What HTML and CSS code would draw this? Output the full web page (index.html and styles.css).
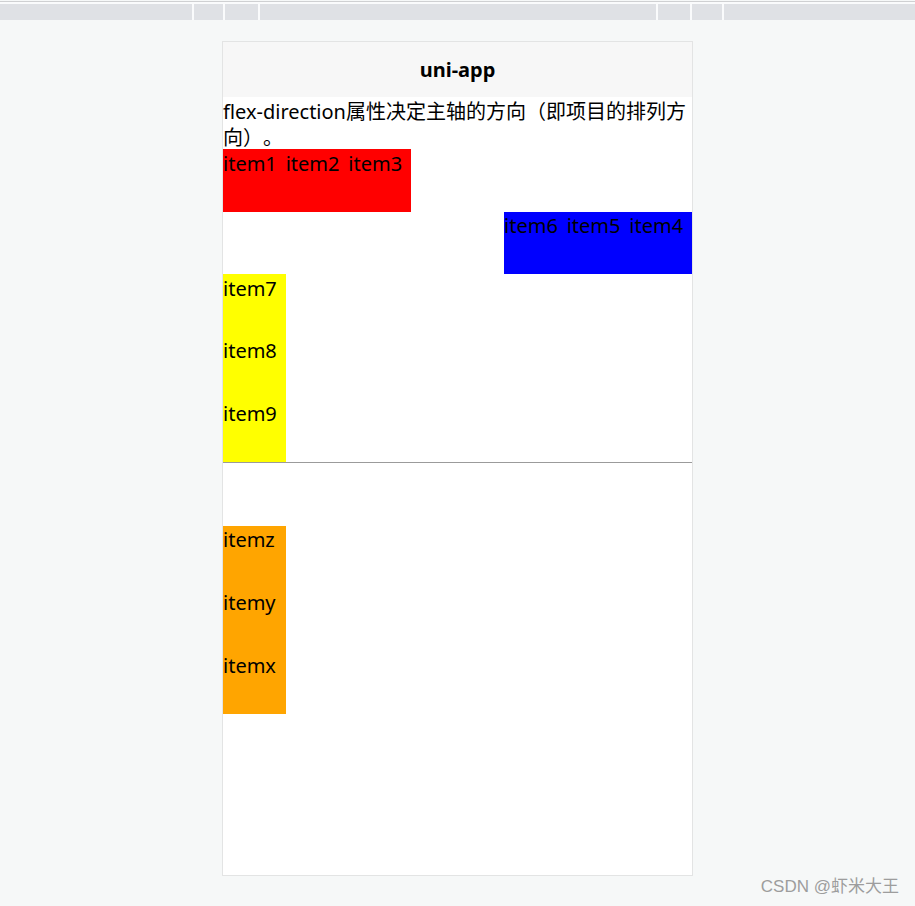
FILE: index.html
```html
<!DOCTYPE html>
<html lang="zh-CN">
<head>
    <meta charset="UTF-8">
    <meta name="viewport" content="width=device-width, initial-scale=1.0">
    <title>uni-app</title>
    <link rel="stylesheet" href="styles.css">
</head>
<body>
    <!-- devtools strip along the top -->
    <div class="strip">
        <div class="seg seg-a"></div>
        <div class="seg seg-b"></div>
        <div class="seg seg-c"></div>
        <div class="seg seg-d"></div>
        <div class="seg seg-e"></div>
        <div class="seg seg-f"></div>
        <div class="seg seg-g"></div>
    </div>

    <div class="phone">
        <div class="nav-bar">uni-app</div>
        <div class="content">
            <p class="intro">flex-direction属性决定主轴的方向（即项目的排列方向）。</p>

            <div class="flex-row">
                <div class="item red">item1</div>
                <div class="item red">item2</div>
                <div class="item red">item3</div>
            </div>

            <div class="flex-row-reverse">
                <div class="item blue">item4</div>
                <div class="item blue">item5</div>
                <div class="item blue">item6</div>
            </div>

            <div class="flex-column">
                <div class="item yellow">item7</div>
                <div class="item yellow">item8</div>
                <div class="item yellow">item9</div>
            </div>

            <div class="flex-column-reverse">
                <div class="item orange">itemx</div>
                <div class="item orange">itemy</div>
                <div class="item orange">itemz</div>
            </div>
        </div>
    </div>

    <div class="watermark">CSDN @虾米大王</div>
</body>
</html>
```

FILE: styles.css
```css
body { margin: 0; background-color: #f6f8f8; font-family: "Noto Sans", "Noto Sans CJK SC", sans-serif; color: #000; }

.strip { display: flex; gap: 2px; height: 16px; margin-top: 1px; padding-top: 2px; border-top: 1px solid #cfd0d2; background-color: #fafbfc; }
.seg { background-color: #dfe1e5; height: 16px; }
.seg-a { width: 192px; }
.seg-b { width: 29px; }
.seg-c { width: 33px; }
.seg-d { width: 396px; }
.seg-e { width: 32px; }
.seg-f { width: 30px; }
.seg-g { flex: 1; }

.phone { width: 471px; height: 835px; margin: 21px auto 0; border: 1px solid #e3e4e4; box-sizing: border-box; background-color: #fff; }
.nav-bar { height: 55px; line-height: 56px; text-align: center; font-size: 20px; font-weight: bold; background-color: #f7f7f7; }

.content { font-size: 20px; line-height: 26px; }
.intro { margin: 0; height: 52px; padding-top: 1.5px; box-sizing: border-box; text-spacing-trim: space-all; }

.flex-row { display: flex; flex-direction: row; }
.flex-row-reverse { display: flex; flex-direction: row-reverse; }
.flex-column { display: flex; flex-direction: column; }
.flex-column-reverse { display: flex; flex-direction: column-reverse; height: 250.67px; border-top: 1px solid #9b9b9b; }

.item { width: 62.67px; height: 62.67px; flex-shrink: 0; padding-top: 1.5px; box-sizing: border-box; }
.red { background-color: red; }
.blue { background-color: blue; }
.yellow { background-color: yellow; }
.orange { background-color: orange; }

.watermark { width: 899px; margin-top: 1px; text-align: right; font-family: "Liberation Sans", "Noto Sans CJK SC", sans-serif; font-size: 17px; line-height: 20px; color: #9d9d9d; }
```
